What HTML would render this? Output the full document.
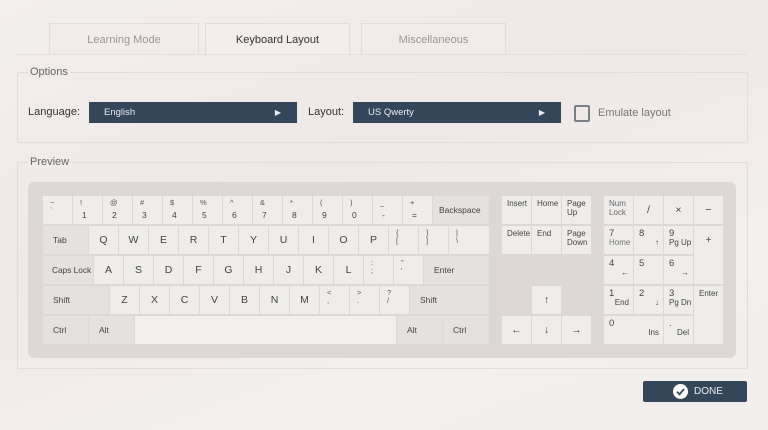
<!DOCTYPE html>
<html><head><meta charset="utf-8"><style>
*{box-sizing:border-box;margin:0;padding:0}
body{width:768px;height:430px;overflow:hidden;background:linear-gradient(160deg,#f3efed 0%,#efe8e6 40%,#f3efee 70%,#f2eeed 100%);font-family:"Liberation Sans",sans-serif;color:#333;position:relative}
.a{position:absolute}
.tab{position:absolute;top:23px;height:32px;border:1px solid #e2dcda;border-bottom:none;font-size:11px;color:#9a9595;text-align:center;line-height:32px;background:#f1ebe9}
.fs{position:absolute;border:1px solid #e2dcda;border-radius:2px}
.lg{position:absolute;font-size:11px;color:#666;background:#f1ebe9;padding:0 2px}
.dd{position:absolute;top:102px;height:21px;background:#34475a;color:#e8ecf0;font-size:9.5px;line-height:21px;padding-left:15px}
.dd span{position:absolute;right:16px;font-size:8px}
.lbl{position:absolute;top:106px;font-size:11px;color:#333}
.k{position:absolute;width:29px;height:28px;background:#efedeb;font-size:9px;color:#444;white-space:nowrap}
.m{background:#e5e1df}
.c{text-align:center;line-height:28px;font-size:10.5px}
.t{position:absolute;left:7px;top:3px;font-size:7.5px;line-height:8px;color:#555}
.b{position:absolute;left:9px;top:14px;font-size:8.5px;color:#444}
.l{line-height:28px;padding-left:10px;font-size:8.5px}
.n{padding:3px 0 0 5px;font-size:8px;line-height:9px}
</style></head><body>
<div class="tab" style="left:49px;width:150px">Learning Mode</div>
<div class="tab" style="left:205px;width:145px;color:#333;background:#f3eeec;height:33px">Keyboard Layout</div>
<div class="tab" style="left:361px;width:145px">Miscellaneous</div>
<div class="a" style="left:17px;top:54px;width:731px;height:1px;background:#e4dedc"></div>

<div class="fs" style="left:17px;top:72px;width:731px;height:71px"></div>
<div class="lg" style="left:28px;top:66px">Options</div>
<div class="lbl" style="left:28px">Language:</div>
<div class="dd" style="left:89px;width:208px">English<span>▶</span></div>
<div class="lbl" style="left:308px">Layout:</div>
<div class="dd" style="left:353px;width:208px">US Qwerty<span>▶</span></div>
<div class="a" style="left:574px;top:105px;width:16px;height:17px;border:2px solid #7a7f86;border-radius:2px"></div>
<div class="lbl" style="left:598px;top:107px;color:#777">Emulate layout</div>

<div class="fs" style="left:17px;top:162px;width:731px;height:207px"></div>
<div class="lg" style="left:28px;top:156px">Preview</div>
<div class="a" style="left:28px;top:182px;width:708px;height:176px;background:#ddd7d5;border-radius:6px"></div>

<div class="k" style="left:43px;top:196px"><div class="t">~<br>`</div></div>
<div class="k" style="left:73px;top:196px"><div class="t">!</div><div class="b">1</div></div>
<div class="k" style="left:103px;top:196px"><div class="t">@</div><div class="b">2</div></div>
<div class="k" style="left:133px;top:196px"><div class="t">#</div><div class="b">3</div></div>
<div class="k" style="left:163px;top:196px"><div class="t">$</div><div class="b">4</div></div>
<div class="k" style="left:193px;top:196px"><div class="t">%</div><div class="b">5</div></div>
<div class="k" style="left:223px;top:196px"><div class="t">^</div><div class="b">6</div></div>
<div class="k" style="left:253px;top:196px"><div class="t">&amp;</div><div class="b">7</div></div>
<div class="k" style="left:283px;top:196px"><div class="t">*</div><div class="b">8</div></div>
<div class="k" style="left:313px;top:196px"><div class="t">(</div><div class="b">9</div></div>
<div class="k" style="left:343px;top:196px"><div class="t">)</div><div class="b">0</div></div>
<div class="k" style="left:373px;top:196px"><div class="t">_</div><div class="b">-</div></div>
<div class="k" style="left:403px;top:196px"><div class="t">+</div><div class="b">=</div></div>
<div class="k m l" style="left:433px;top:196px;width:56px;padding-left:6px">Backspace</div>

<div class="k m l" style="left:43px;top:226px;width:45px">Tab</div>
<div class="k c" style="left:89px;top:226px">Q</div>
<div class="k c" style="left:119px;top:226px">W</div>
<div class="k c" style="left:149px;top:226px">E</div>
<div class="k c" style="left:179px;top:226px">R</div>
<div class="k c" style="left:209px;top:226px">T</div>
<div class="k c" style="left:239px;top:226px">Y</div>
<div class="k c" style="left:269px;top:226px">U</div>
<div class="k c" style="left:299px;top:226px">I</div>
<div class="k c" style="left:329px;top:226px">O</div>
<div class="k c" style="left:359px;top:226px">P</div>
<div class="k" style="left:389px;top:226px"><div class="t">{<br>[</div></div>
<div class="k" style="left:419px;top:226px"><div class="t">}<br>]</div></div>
<div class="k" style="left:449px;top:226px;width:40px"><div class="t">|<br>\</div></div>

<div class="k m l" style="left:43px;top:256px;width:50px;padding-left:9px;font-size:8.3px">Caps Lock</div>
<div class="k c" style="left:94px;top:256px">A</div>
<div class="k c" style="left:124px;top:256px">S</div>
<div class="k c" style="left:154px;top:256px">D</div>
<div class="k c" style="left:184px;top:256px">F</div>
<div class="k c" style="left:214px;top:256px">G</div>
<div class="k c" style="left:244px;top:256px">H</div>
<div class="k c" style="left:274px;top:256px">J</div>
<div class="k c" style="left:304px;top:256px">K</div>
<div class="k c" style="left:334px;top:256px">L</div>
<div class="k" style="left:364px;top:256px"><div class="t">:<br>;</div></div>
<div class="k" style="left:394px;top:256px"><div class="t">"<br>'</div></div>
<div class="k m l" style="left:424px;top:256px;width:65px">Enter</div>

<div class="k m l" style="left:43px;top:286px;width:66px">Shift</div>
<div class="k c" style="left:110px;top:286px">Z</div>
<div class="k c" style="left:140px;top:286px">X</div>
<div class="k c" style="left:170px;top:286px">C</div>
<div class="k c" style="left:200px;top:286px">V</div>
<div class="k c" style="left:230px;top:286px">B</div>
<div class="k c" style="left:260px;top:286px">N</div>
<div class="k c" style="left:290px;top:286px">M</div>
<div class="k" style="left:320px;top:286px"><div class="t">&lt;<br>,</div></div>
<div class="k" style="left:350px;top:286px"><div class="t">&gt;<br>.</div></div>
<div class="k" style="left:380px;top:286px"><div class="t">?<br>/</div></div>
<div class="k m l" style="left:410px;top:286px;width:79px">Shift</div>

<div class="k m l" style="left:43px;top:316px;width:45px">Ctrl</div>
<div class="k m l" style="left:89px;top:316px;width:45px">Alt</div>
<div class="k" style="left:135px;top:316px;width:261px;background:#f1f0ee"></div>
<div class="k m l" style="left:397px;top:316px;width:45px">Alt</div>
<div class="k m l" style="left:443px;top:316px;width:46px">Ctrl</div>

<div class="k n" style="left:502px;top:196px">Insert</div>
<div class="k n" style="left:532px;top:196px">Home</div>
<div class="k n" style="left:562px;top:196px">Page<br>Up</div>
<div class="k n" style="left:502px;top:226px">Delete</div>
<div class="k n" style="left:532px;top:226px">End</div>
<div class="k n" style="left:562px;top:226px">Page<br>Down</div>
<div class="k c" style="left:532px;top:286px">↑</div>
<div class="k c" style="left:502px;top:316px">←</div>
<div class="k c" style="left:532px;top:316px">↓</div>
<div class="k c" style="left:562px;top:316px">→</div>

<div class="k n" style="left:604px;top:196px;color:#666">Num<br>Lock</div>
<div class="k c" style="left:634px;top:196px">/</div>
<div class="k c" style="left:664px;top:196px">×</div>
<div class="k c" style="left:694px;top:196px">−</div>
<div class="k n" style="left:604px;top:226px;font-size:9.5px">7<div style="font-size:8px;color:#777">Home</div></div>
<div class="k n" style="left:634px;top:226px;font-size:9.5px">8<div style="font-size:8px;text-align:right;padding-right:4px">↑</div></div>
<div class="k n" style="left:664px;top:226px;font-size:9.5px">9<div style="font-size:8px">Pg Up</div></div>
<div class="k c" style="left:694px;top:226px;height:58px;line-height:28px">+</div>
<div class="k n" style="left:604px;top:256px;font-size:9.5px">4<div style="font-size:8px;text-align:right;padding-right:4px">←</div></div>
<div class="k n" style="left:634px;top:256px;font-size:9.5px">5</div>
<div class="k n" style="left:664px;top:256px;font-size:9.5px">6<div style="font-size:8px;text-align:right;padding-right:4px">→</div></div>
<div class="k n" style="left:604px;top:286px;font-size:9.5px">1<div style="font-size:8px;text-align:right;padding-right:4px">End</div></div>
<div class="k n" style="left:634px;top:286px;font-size:9.5px">2<div style="font-size:8px;text-align:right;padding-right:4px">↓</div></div>
<div class="k n" style="left:664px;top:286px;font-size:9.5px">3<div style="font-size:8px">Pg Dn</div></div>
<div class="k n" style="left:694px;top:286px;height:58px">Enter</div>
<div class="k n" style="left:604px;top:316px;width:59px;font-size:9.5px">0<div style="font-size:8px;text-align:right;padding-right:4px">Ins</div></div>
<div class="k n" style="left:664px;top:316px;font-size:9.5px">.<div style="font-size:8px;text-align:right;padding-right:4px">Del</div></div>

<div class="a" style="left:643px;top:381px;width:104px;height:21px;background:#34475a;border-radius:2px;color:#e8ecf0;font-size:10px;line-height:21px">
<svg class="a" style="left:30px;top:3px" width="15" height="15" viewBox="0 0 15 15"><circle cx="7.5" cy="7.5" r="7.5" fill="#fff"/><path d="M4 7.8l2.5 2.5L11 5" stroke="#34475a" stroke-width="1.8" fill="none"/></svg>
<span class="a" style="left:51px">DONE</span></div>
</body></html>
